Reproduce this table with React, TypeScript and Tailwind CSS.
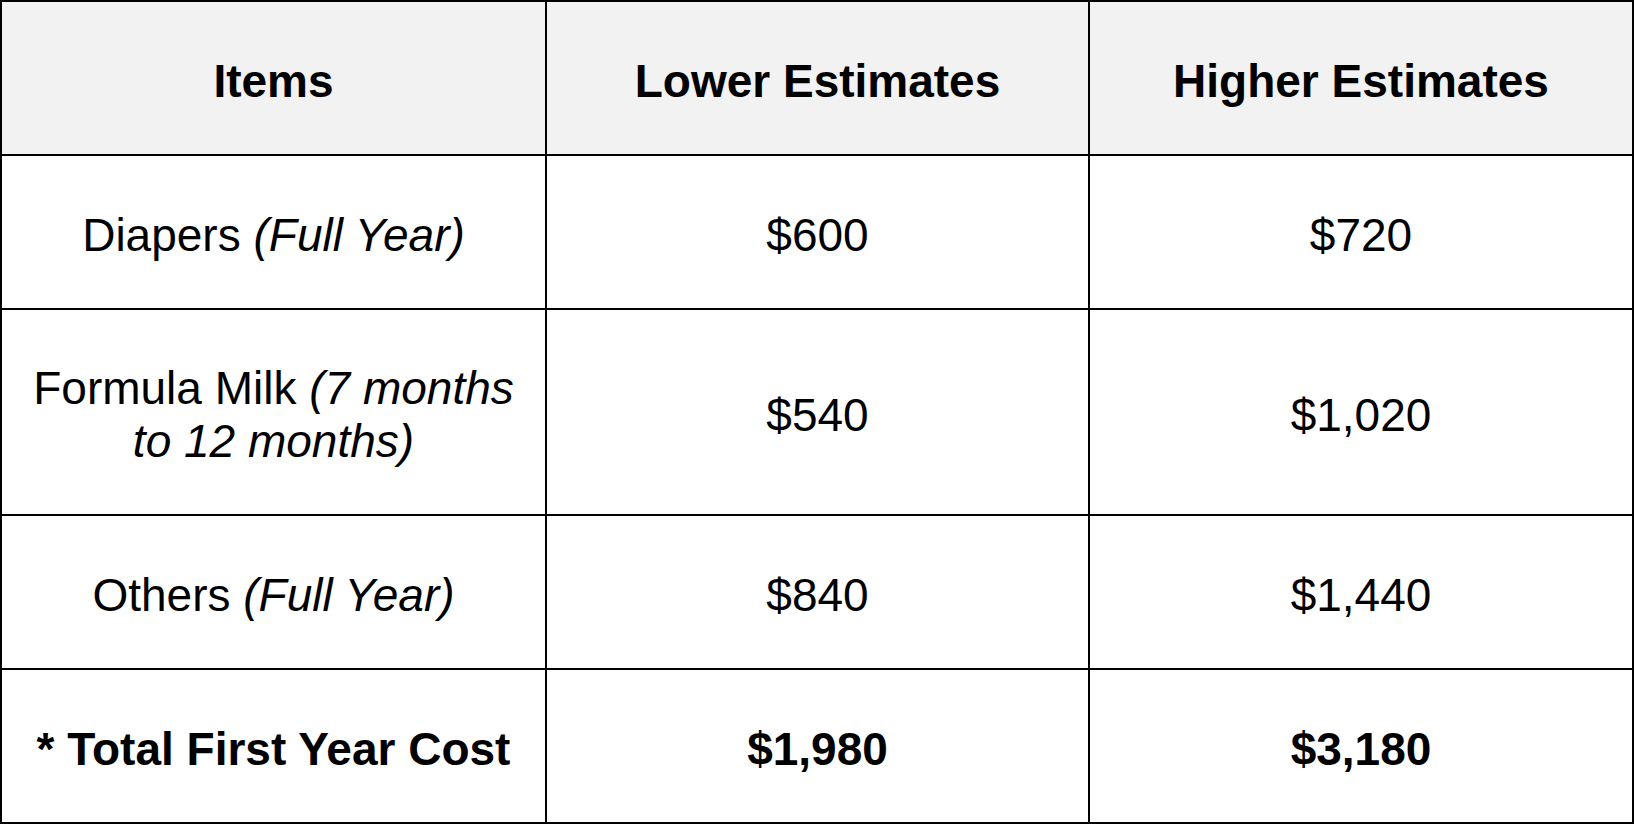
const rows = [
  { item: "Diapers", note: "(Full Year)", low: "$600", high: "$720", tall: false },
  { item: "Formula Milk", note: "(7 months to 12 months)", low: "$540", high: "$1,020", tall: true },
  { item: "Others", note: "(Full Year)", low: "$840", high: "$1,440", tall: false },
]

const cell =
  "flex items-center justify-center border-r-2 border-b-2 border-black px-5 pt-[6px] text-center leading-[50px]"

export default function App() {
  return (
    <div className="bg-white font-['Liberation_Sans',Arial,sans-serif] text-black">
      <div className="grid h-[824px] w-[1634px] grid-cols-[545px_543px_544px] grid-rows-[154px_154px_206px_154px_154px] border-t-2 border-l-2 border-black">
        <div className={`${cell} bg-[#f2f2f2] text-[46px] font-bold`}>Items</div>
        <div className={`${cell} bg-[#f2f2f2] text-[46px] font-bold`}>Lower Estimates</div>
        <div className={`${cell} bg-[#f2f2f2] text-[46px] font-bold`}>Higher Estimates</div>

        {rows.map((r) => (
          <div key={r.item} className="contents">
            <div className={`${cell} text-[46px]`}>
              <span className={r.tall ? "leading-[53px]" : ""}>
                {r.item} <i>{r.note}</i>
              </span>
            </div>
            <div className={`${cell} text-[46px]`}>{r.low}</div>
            <div className={`${cell} text-[46px]`}>{r.high}</div>
          </div>
        ))}

        <div className={`${cell} text-[46px] font-bold`}>* Total First Year Cost</div>
        <div className={`${cell} text-[46px] font-bold`}>$1,980</div>
        <div className={`${cell} text-[46px] font-bold`}>$3,180</div>
      </div>
    </div>
  )
}
